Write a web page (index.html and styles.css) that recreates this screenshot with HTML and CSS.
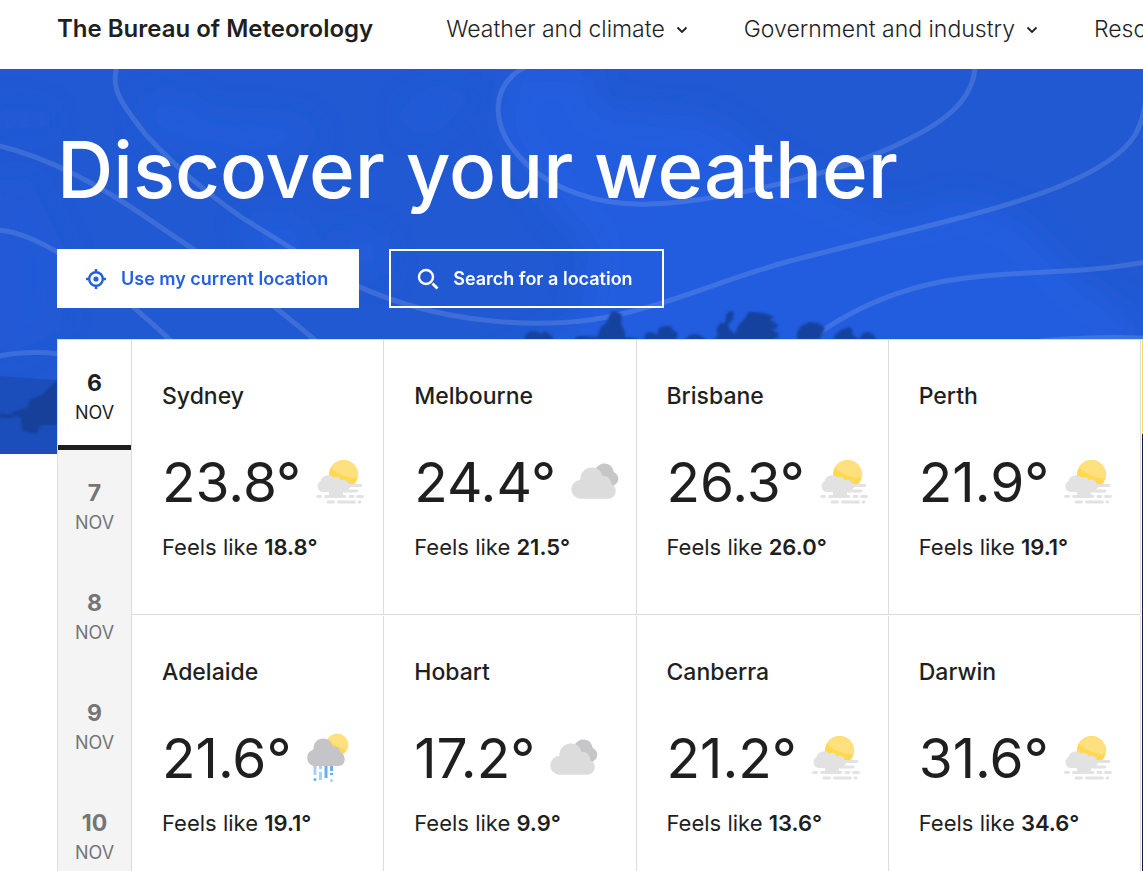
FILE: index.html
```html
<!DOCTYPE html>
<html lang="en">
<head>
    <meta charset="UTF-8">
    <meta name="viewport" content="width=device-width, initial-scale=1.0">
    <title>The Bureau of Meteorology</title>
    <link rel="stylesheet" href="styles.css">
</head>
<body>
    <!-- Shared weather symbols -->
    <svg class="symbols" aria-hidden="true">
        <symbol id="hazy" viewBox="0 -1 48 46" preserveAspectRatio="xMinYMid meet">
            <circle cx="27.500" cy="14.500" r="14.500" fill="#ffd954"/>
            <path d="M15 7.500A14.500 14.500 0 0 1 41.600 18.200C31 18.500 21 13.500 15 7.500z" fill="#ffe07e"/>
            <path d="M6 32a6 6 0 0 1-1.500-11A7.500 7.500 0 0 1 17 17.500a6 6 0 0 1 8 3 5.500 5.500 0 0 1 8 4h1v3L30 32h-3v3h2v2H9v-2h4v-3z" fill="#e2e2e3"/>
            <path d="M31 25.500h14M28 31h13M1.500 36.500h3M9.500 36.500h19.500M34 36.500h3M41.500 36.500h5M12 42h5.500M22.500 42h16M43 42h1" fill="none" stroke="#e2e2e3" stroke-width="2.800" stroke-linecap="round"/>
        </symbol>
        <symbol id="cloudy" viewBox="0 1 49 38" preserveAspectRatio="xMinYMid meet">
            <path d="M24 9C28-2 42-1 43.500 9.500 50 13 50 21 43 24L30 22z" fill="#c6c6c8"/>
            <path d="M10 37A9.500 9.500 0 0 1 9.500 18C9 3 29 1 32 13.500 38 13.500 41 17 41 22 49 26 46 37 38 37z" fill="#dcdcdd"/>
        </symbol>
        <symbol id="showers" viewBox="2 0 44 50" preserveAspectRatio="xMinYMid meet">
            <circle cx="32" cy="12" r="11" fill="#ffd75c"/>
            <path d="M23 6A11 11 0 0 1 42.500 16C36 16 29 12 23 6z" fill="#ffe07e"/>
            <path d="M9 33A8.500 8.500 0 0 1 8.500 16.500C8 3 25 2 27.500 13.500 32.500 13 35 16 35 19 42 22 41 33 33.500 33z" fill="#c5c4c8"/>
            <g fill="none" stroke-width="3">
                <path d="M10 33v9M15.500 33v3M15.500 39v8" stroke="#a9d0f7"/>
                <path d="M21 33v12" stroke="#65aff2"/>
                <path d="M26.500 33v5M26.500 40v2" stroke="#65aff2"/>
            </g>
            <circle cx="10" cy="46.500" r="1.500" fill="#65aff2"/>
            <circle cx="26.500" cy="47.500" r="1.500" fill="#a9d0f7"/>
        </symbol>
        <symbol id="chevron" viewBox="0 0 12 12">
            <path d="M1.500 4.500l4.500 4.500L10.500 4.500" fill="none" stroke="currentColor" stroke-width="1.800"/>
        </symbol>
    </svg>

    <header class="header">
        <a class="brand" href="#">The Bureau of Meteorology</a>
        <nav class="nav">
            <button class="nav-item" type="button">Weather and climate <svg class="chevron"><use href="#chevron"/></svg></button>
            <button class="nav-item" type="button">Government and industry <svg class="chevron"><use href="#chevron"/></svg></button>
            <button class="nav-item" type="button">Resources</button>
        </nav>
    </header>

    <main class="main">
        <svg class="hero-art" viewBox="0 69 1143 385" preserveAspectRatio="xMinYMin slice" aria-hidden="true">
            <defs>
                <filter id="soft" x="-20%" y="-20%" width="140%" height="140%"><feGaussianBlur stdDeviation="14"/></filter>
                <filter id="edge"><feGaussianBlur stdDeviation="0.800"/></filter>
            </defs>
            <rect x="0" y="69" width="1143" height="385" fill="#2159d3"/>
            <!-- clouds -->
            <g fill="#235fe4" filter="url(#soft)">
                <path d="M510 69h80l10 40 110 10 70 50 120 50 60-20 60 20 60 60 55 40v60H480l100-60 10-70-60-70-30-50z" opacity="0.700"/>
                <path d="M150 95l30 0 30 20 90 5 20 20-60 20-80-15-40-20zM240 220l60 0 20 40-60 0zM340 230l40 5 10 40-50-5zM400 110l60-25 0 20-40 30z" opacity="0.500"/>
                <path d="M0 180l30 0 40 80-10 70-60 30zM0 105l50 5 0 20-50 0z" opacity="0.250"/>
            </g>
            <!-- isobars -->
            <g class="isobars">
                <path d="M117 67C110 88 122 105 146 135C174 165 200 188 241 217L299 253C338 279 370 293 405 304C460 321 530 328 590 320C655 311 720 280 790 261L936 224C1025 202 1110 175 1135 135C1143 121 1146 108 1146 90"/>
                <path d="M525 67C491 85 490 124 518 155C548 190 600 206 650 204C717 202 840 174 905 141C950 119 973 98 975 67"/>
                <path d="M-5 145C50 157 103 187 153 222C210 261 262 294 316 341"/>
                <path d="M-5 230C38 230 110 283 171 341"/>
                <path d="M-5 357Q25 350 60 354"/>
                <path d="M808 341C845 313 890 292 940 282C1010 269 1070 276 1146 262"/>
                <path d="M1040 341Q1090 336 1146 338"/>
            </g>
            <!-- tree line -->
            <g fill="#18439f" filter="url(#edge)">
                <path d="M524 340l2-6 5-3 7 1 3 2 4-3 6 4 3 5z"/>
                <path d="M574 340l3-4 8 0 12 1 4-10 5-4 5-11 5-1 6 4-1 9 4 8 0 5 10 1 6 2z"/>
                <path d="M643 340l4-8 7 1 3 2 2-7 6-2 6 0 2 4 5 3-2 7zM684 340l6-5 6-1 5 2 5 4z"/>
                <path d="M714 340l4-6-2-4 4-7 5 0 1-9 4-3 4 1-1 7-5 6 2 5 5 4 3-8 8-9 2-5 8 0 11 2 8 3-5 2 8 6-2 4-5 0 9 5-4 1 4 2-9 3-14 0z"/>
                <path d="M797 340l0-7 4-7 8-4 9 1 7 5-3 6-3 6zM834 340l1-5 6-5 8-3 4 3-1 4 4 3 3 3zM859 340l4-7 6-1 5 3 2 5z"/>
            </g>
            <path d="M0 376l57 4v74H0z" fill="#1c4ebb"/>
            <path d="M57 380l-15 15-13 5-1 7-18 6 11 4 1 14 14 3 5-9 16 0zM0 413l21 4-21 1z" fill="#183f99" filter="url(#edge)"/>
        </svg>

        <section class="hero">
            <h1>Discover your weather</h1>
            <div class="actions">
                <button class="btn btn-light" type="button">
                    <svg class="btn-icon" viewBox="0 0 22 22" fill="none" stroke="currentColor" stroke-width="2.400">
                        <circle cx="11" cy="11" r="6.800"/>
                        <circle cx="11" cy="11" r="2.600" fill="currentColor" stroke="none"/>
                        <path d="M11 1v4M11 17v4M1 11h4M17 11h4"/>
                    </svg>
                    Use my current location
                </button>
                <button class="btn btn-outline" type="button">
                    <svg class="btn-icon" viewBox="0 0 22 22" fill="none" stroke="currentColor">
                        <circle cx="9" cy="9" r="7" stroke-width="2.400"/>
                        <path d="M15.500 15.500l5 5" stroke-width="2.800"/>
                    </svg>
                    Search for a location
                </button>
            </div>
        </section>

        <section class="forecast">
            <div class="days">
                <button class="day active" type="button"><b>6</b><span>NOV</span></button>
                <button class="day" type="button"><b>7</b><span>NOV</span></button>
                <button class="day" type="button"><b>8</b><span>NOV</span></button>
                <button class="day" type="button"><b>9</b><span>NOV</span></button>
                <button class="day" type="button"><b>10</b><span>NOV</span></button>
            </div>
            <div class="cities">
                <article class="city">
                    <h2>Sydney</h2>
                    <div class="now">23.8° <svg class="weather"><use href="#hazy"/></svg></div>
                    <p>Feels like <b>18.8°</b></p>
                </article>
                <article class="city">
                    <h2>Melbourne</h2>
                    <div class="now">24.4° <svg class="weather"><use href="#cloudy"/></svg></div>
                    <p>Feels like <b>21.5°</b></p>
                </article>
                <article class="city">
                    <h2>Brisbane</h2>
                    <div class="now">26.3° <svg class="weather"><use href="#hazy"/></svg></div>
                    <p>Feels like <b>26.0°</b></p>
                </article>
                <article class="city">
                    <h2>Perth</h2>
                    <div class="now">21.9° <svg class="weather"><use href="#hazy"/></svg></div>
                    <p>Feels like <b>19.1°</b></p>
                </article>
                <article class="city">
                    <h2>Adelaide</h2>
                    <div class="now">21.6° <svg class="weather"><use href="#showers"/></svg></div>
                    <p>Feels like <b>19.1°</b></p>
                </article>
                <article class="city">
                    <h2>Hobart</h2>
                    <div class="now">17.2° <svg class="weather"><use href="#cloudy"/></svg></div>
                    <p>Feels like <b>9.9°</b></p>
                </article>
                <article class="city">
                    <h2>Canberra</h2>
                    <div class="now">21.2° <svg class="weather"><use href="#hazy"/></svg></div>
                    <p>Feels like <b>13.6°</b></p>
                </article>
                <article class="city">
                    <h2>Darwin</h2>
                    <div class="now">31.6° <svg class="weather"><use href="#hazy"/></svg></div>
                    <p>Feels like <b>34.6°</b></p>
                </article>
            </div>
            <div class="warnings"></div>
        </section>
    </main>
</body>
</html>
```

FILE: styles.css
```css
* {
    box-sizing: border-box;
}
body {
    margin: 0;
    height: 100vh;
    overflow: hidden;
    font-family: Inter, "Liberation Sans", sans-serif;
    color: #1f1f1f;
    background: #fff;
}
button {
    font: inherit;
    color: inherit;
    border: 0;
    padding: 0;
    background: none;
    cursor: pointer;
}
h1, h2, p {
    margin: 0;
}
.symbols {
    display: none;
}

/* Header */
.header {
    display: flex;
    gap: 73px;
    padding: 13px 0 24px 57px;
    white-space: nowrap;
    overflow: hidden;
}
.brand {
    font-size: 24px;
    font-weight: 600;
    line-height: 32px;
    color: inherit;
    text-decoration: none;
}
.nav {
    display: flex;
    gap: 56px;
}
.nav-item {
    display: flex;
    align-items: center;
    gap: 11px;
    font-size: 23px;
    font-weight: 350;
    line-height: 32px;
}
.chevron {
    width: 12px;
    height: 12px;
}

/* Hero */
.main {
    position: relative;
}
.hero-art {
    position: absolute;
    top: 0;
    left: 0;
    width: 100%;
    height: 385px;
}
.isobars {
    fill: none;
    stroke: #fff;
    stroke-width: 5px;
    stroke-opacity: 0.13;
}
.hero {
    position: relative;
    padding: 53px 57px 31px;
    color: #fff;
}
h1 {
    font-size: 78px;
    font-weight: 500;
    line-height: 95px;
    white-space: nowrap;
}
.actions {
    display: flex;
    gap: 30px;
    margin-top: 32px;
}
.btn {
    display: flex;
    align-items: center;
    gap: 14px;
    height: 59px;
    padding: 0 29px 0 26px;
    border: 2px solid #fff;
    font-size: 18px;
    font-weight: 600;
    white-space: nowrap;
}
.btn-light {
    background: #fff;
    color: #235fe0;
}
.btn-icon {
    width: 22px;
    height: 22px;
}

/* Forecast */
.forecast {
    position: relative;
    display: grid;
    grid-template-columns: 75px 1fr 2px;
    margin-left: 57px;
    background: #fff;
    border-top: 1px solid #dcdcdc;
}
.days {
    background: #f4f4f4;
    border: 1px solid #dcdcdc;
    border-width: 0 1px;
}
.day {
    display: flex;
    flex-direction: column;
    align-items: center;
    width: 100%;
    height: 110px;
    padding-top: 28px;
    color: #757575;
}
.day b {
    font-size: 23px;
    line-height: 30px;
}
.day span {
    font-size: 18px;
    line-height: 30px;
}
.day.active {
    background: #fff;
    color: #1f1f1f;
    border-bottom: 5px solid #1f1f1f;
}
.cities {
    display: grid;
    grid-template-columns: repeat(4, 1fr);
    row-gap: 1px;
}
.city {
    height: 275px;
    padding: 40px 0 0 30px;
    border: 1px solid #dcdcdc;
    border-width: 0 1px 1px 0;
    white-space: nowrap;
}
.city h2 {
    font-size: 23px;
    font-weight: 450;
    line-height: 32px;
}
.now {
    display: flex;
    align-items: center;
    gap: 15px;
    margin-top: 36px;
    font-size: 55px;
    line-height: 68px;
}
.weather {
    width: 48px;
    height: 50px;
}
.city p {
    margin-top: 15px;
    font-size: 22px;
    line-height: 32px;
}
.city b {
    font-weight: 600;
}
.warnings {
    margin-left: 1px;
    background: linear-gradient(#ffd954 94px, #0c1c4a 94px);
}
```
